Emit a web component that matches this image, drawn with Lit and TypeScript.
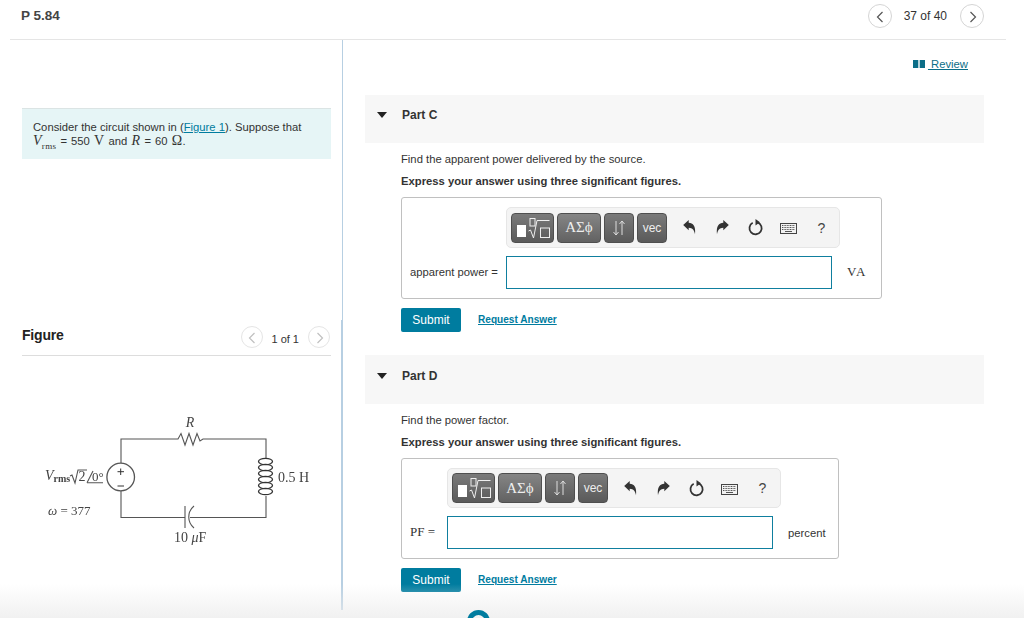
import { css, html, LitElement, svg } from "lit";
import { customElement } from "lit/decorators.js";

const prev = svg`<path d="M13.5 7 L8.5 12 L13.5 17" fill="none" stroke="currentColor" stroke-width="1.2"/>`;
const next = svg`<path d="M9.5 7 L14.5 12 L9.5 17" fill="none" stroke="currentColor" stroke-width="1.2"/>`;

@customElement("math-toolbar")
export class MathToolbar extends LitElement {
  static styles = css`
    :host {
      display: flex;
      align-items: center;
      box-sizing: border-box;
      width: 334px;
      height: 41px;
      padding: 0 4px;
      background: #f4f4f4;
      border: 1px solid #e6e6e6;
      border-radius: 5px;
    }
    .tool {
      box-sizing: border-box;
      flex: none;
      height: 30px;
      margin-right: 3px;
      display: flex;
      align-items: center;
      justify-content: center;
      color: #eee;
      background: linear-gradient(#7a7a7a, #5a5a5a);
      border: 1px solid #4f4f4f;
      border-radius: 4px;
      font-family: "Liberation Sans", Arial, sans-serif;
      font-size: 12px;
    }
    .templates { width: 43px; }
    .symbols { width: 44px; font-family: "Liberation Serif", serif; font-size: 15px; background: linear-gradient(#858585, #626262); }
    .arrows { width: 30px; }
    .vec { width: 30px; }
    .actions {
      display: flex;
      align-items: center;
      margin-left: 10px;
      gap: 14px;
    }
    .actions svg { display: block; width: 19px; height: 19px; }
    .help {
      font: 14px "Liberation Sans", Arial, sans-serif;
      color: #444;
      width: 19px;
      text-align: center;
    }
  `;

  render() {
    return html`
      <div class="tool templates">
        <svg width="39" height="26" viewBox="0 0 39 26">
          <rect x="4" y="10" width="9" height="12" fill="#fff" />
          <rect x="17" y="3.5" width="5" height="7.5" fill="none" stroke="#eee" />
          <path d="M15.5 16 L17.5 15 L20.5 23 L24 5.5 H36.5" fill="none" stroke="#eee" />
          <rect x="27.5" y="13" width="9" height="9.5" fill="none" stroke="#eee" />
        </svg>
      </div>
      <div class="tool symbols">ΑΣϕ</div>
      <div class="tool arrows">
        <svg width="16" height="18" viewBox="0 0 16 18">
          <path d="M5 2 V16 M2.5 13 L5 16 L7.5 13 M11 16 V2 M8.5 5 L11 2 L13.5 5" fill="none" stroke="#ddd" />
        </svg>
      </div>
      <div class="tool vec">vec</div>
      <div class="actions">
        <svg viewBox="0 0 19 19">
          <path d="M3.2 7 L8.7 2 V4.7 C13 4.7 16 8 15 16.2 C14.4 12.5 12.5 9.7 8.7 9.7 V12.2 Z" fill="#333" />
        </svg>
        <svg viewBox="0 0 19 19">
          <path d="M15.8 7 L10.3 2 V4.7 C6 4.7 3 8 4 16.2 C4.6 12.5 6.5 9.7 10.3 9.7 V12.2 Z" fill="#333" />
        </svg>
        <svg viewBox="0 0 19 19">
          <path d="M6.7 4.8 A6.1 6.1 0 1 0 11.5 4.4" fill="none" stroke="#333" stroke-width="1.8" />
          <path d="M9.5 1 L14 4.2 L9.5 7.5 Z" fill="#333" />
        </svg>
        <svg viewBox="0 0 19 19">
          <rect x="1.5" y="5.5" width="16" height="10" fill="#f2f2f2" stroke="#444" />
          <path d="M3 7.5 H16 M3 9.5 H16 M3 11.5 H16" stroke="#555" stroke-dasharray="1 0.6" />
          <path d="M6 13.5 H13" stroke="#555" />
        </svg>
        <span class="help">?</span>
      </div>
    `;
  }
}

@customElement("part-section")
export class PartSection extends LitElement {
  static properties = {
    name: {},
    question: {},
    label: {},
    unit: {},
  };
  declare name: string;
  declare question: string;
  declare label: string;
  declare unit: string;

  static styles = css`
    :host {
      display: block;
      font-family: "Liberation Sans", Arial, sans-serif;
      color: #333;
    }
    .bar {
      display: flex;
      align-items: center;
      box-sizing: border-box;
      height: 48px;
      padding: 0 0 8px 12px;
      background: #f7f7f7;
      margin-right: 40px;
    }
    .bar.tall { height: 49px; }
    .bar i {
      width: 0;
      height: 0;
      border-left: 5px solid transparent;
      border-right: 5px solid transparent;
      border-top: 6px solid #222;
      margin: 0 15px 0 0;
    }
    .bar b { font-size: 12px; color: #333; }
    .content { padding: 9px 0 0 36px; }
    p { margin: 0; font-size: 11.25px; line-height: 15px; }
    .express { margin-top: 7px; font-weight: bold; }
    .answer {
      box-sizing: border-box;
      margin-top: 8px;
      padding: 9px 0 9px 8px;
      background: #fff;
      border: 1px solid #c0c0c0;
      border-radius: 3px;
    }
    .tools { display: flex; margin-bottom: 8px; }
    .row { display: flex; align-items: center; }
    .label { flex: none; margin-top: -1px; font-size: 11.25px; white-space: nowrap; }
    input {
      flex: none;
      box-sizing: border-box;
      height: 33px;
      width: 326px;
      margin: 0 0 0 8px;
      padding: 0;
      background: #fff;
      border: 1px solid #0f7f9f;
      border-radius: 0;
    }
    .unit { margin: -1px 0 0 15px; font: 13px "Liberation Serif", serif; letter-spacing: 1.2px; }
    .actions {
      display: flex;
      align-items: center;
      margin-top: 9px;
      gap: 17px;
    }
    button {
      width: 60px;
      height: 24px;
      padding: 0;
      border: 0;
      border-radius: 2px;
      background: #007c9f;
      color: #fff;
      font: 12px "Liberation Sans", Arial, sans-serif;
    }
    a {
      color: #007c9f;
      font-size: 10.1px;
      font-weight: bold;
      margin-top: -2px;
    }
    .va .answer { width: 481px; }
    .va .tools { padding-left: 96px; }
    .va .label { width: 88px; }
    .pf .answer { width: 438px; }
    .pf .tools { padding-left: 37px; }
    .pf math-toolbar { height: 40px; }
    .pf .label { width: 29px; font: 13px "Liberation Serif", serif; }
    .pf .unit { margin: 0 0 0 15px; font: 11.25px "Liberation Sans", Arial, sans-serif; letter-spacing: 0; }
  `;

  render() {
    const pf = this.name === "Part D";
    return html`
      <div class="bar ${pf ? "tall" : ""}"><i></i><b>${this.name}</b></div>
      <div class="content ${pf ? "pf" : "va"}">
        <p>${this.question}</p>
        <p class="express">Express your answer using three significant figures.</p>
        <div class="answer">
          <div class="tools"><math-toolbar></math-toolbar></div>
          <div class="row">
            <span class="label">${this.label}</span>
            <input type="text" />
            <span class="unit">${this.unit}</span>
          </div>
        </div>
        <div class="actions">
          <button>Submit</button>
          <a href="#">Request Answer</a>
        </div>
      </div>
    `;
  }
}

@customElement("app-root")
export class AppRoot extends LitElement {
  static styles = css`
    :host {
      display: block;
      position: relative;
      height: 618px;
      overflow: hidden;
      background: #fff;
      font-family: "Liberation Sans", Arial, sans-serif;
      color: #333;
    }
    header {
      display: flex;
      align-items: center;
      justify-content: space-between;
      box-sizing: border-box;
      height: 40px;
      margin: 0 18px 0 10px;
      padding: 0 22px 8px 11px;
      border-bottom: 1px solid #e5e5e5;
    }
    header b { font-size: 13.5px; color: #444; }
    .pager { display: flex; align-items: center; font-size: 12px; }
    .round {
      box-sizing: border-box;
      display: flex;
      width: 24px;
      height: 24px;
      border: 1px solid #d5d5d5;
      border-radius: 50%;
      color: #555;
    }
    .pager span { margin: 0 13px 0 12px; }
    main { display: flex; }
    .left {
      box-sizing: border-box;
      width: 343px;
      height: 570px;
      padding: 68px 11px 0 22px;
      border-right: 1px solid #b7cfe2;
      background: linear-gradient(#b7cfe2, #b7cfe2) no-repeat right bottom / 1px 290px;
    }
    .notice {
      box-sizing: border-box;
      height: 51px;
      padding: 12px 11px 0;
      background: #e6f5f6;
      border-top: 1px solid #dbe4e4;
      font-size: 11.25px;
      line-height: 12px;
    }
    .notice a { color: #007c9f; }
    .formula { word-spacing: 1px; }
    .math { font: 14px "Liberation Serif", serif; letter-spacing: 0.3px; }
    .math sub { font-size: 9px; line-height: 0; }
    .fig-head {
      display: flex;
      align-items: center;
      justify-content: space-between;
      margin-top: 160px;
      height: 36px;
      padding-right: 1px;
      border-bottom: 1px solid #ddd;
    }
    .fig-head b { font-size: 14px; color: #222; letter-spacing: -0.2px; margin-top: -4px; }
    .fig-pager { display: flex; align-items: center; font-size: 11px; }
    .fig-pager span { margin: 3px 9px 0 8px; }
    .fig-pager .round { width: 22px; height: 22px; border-color: #e5e5e5; color: #c0c0c0; }
    .fig-pager svg { margin: -1px; }
    .circuit { display: block; margin: 45px 0 0 -22px; filter: blur(0.3px); }
    .circuit text { font-family: "Liberation Serif", serif; font-size: 14px; fill: #444; }
    .circuit .small { font-size: 13px; }
    .circuit .sub { font-size: 10px; font-weight: bold; }
    .circuit .name { font-style: italic; }
    .right { flex: 1; padding: 0 0 0 22px; }
    .review {
      display: flex;
      justify-content: flex-end;
      align-items: center;
      box-sizing: border-box;
      height: 55px;
      padding: 0 56px 7px 0;
      font-size: 11.25px;
    }
    .review a { color: #0b6e88; display: flex; align-items: center; }
    .review svg { margin-right: 3px; }
    .part-d { margin-top: 23px; }
    .fade {
      position: absolute;
      left: 0;
      right: 0;
      bottom: 0;
      height: 34px;
      background: linear-gradient(rgba(240, 240, 240, 0), rgba(236, 236, 236, 0.75));
      pointer-events: none;
    }
    .help-dot {
      position: absolute;
      left: 467px;
      top: 610px;
      width: 23px;
      height: 23px;
      box-sizing: border-box;
      border: 5px solid #007c9f;
      border-radius: 50%;
    }
  `;

  render() {
    return html`
      <header>
        <b>P 5.84</b>
        <div class="pager">
          <div class="round"><svg width="22" height="22" viewBox="0 0 22 22">${prev}</svg></div>
          <span>37 of 40</span>
          <div class="round"><svg width="22" height="22" viewBox="0 0 22 22">${next}</svg></div>
        </div>
      </header>
      <main>
        <section class="left">
          <div class="notice">
            Consider the circuit shown in (<a href="#">Figure 1</a>). Suppose that<br />
            <span class="formula">
              <span class="math"><i>V</i><sub>rms</sub></span> = 550
              <span class="math">V</span> and <span class="math"><i>R</i></span> = 60
              <span class="math">Ω</span>.
            </span>
          </div>
          <div class="fig-head">
            <b>Figure</b>
            <div class="fig-pager">
              <div class="round"><svg width="22" height="22" viewBox="0 0 22 22">${prev}</svg></div>
              <span>1 of 1</span>
              <div class="round"><svg width="22" height="22" viewBox="0 0 22 22">${next}</svg></div>
            </div>
          </div>
          <svg class="circuit" width="340" height="160" viewBox="0 0 340 160">
            <g fill="none" stroke="#555" stroke-width="1.1">
              <path d="M121 62 V38 H178 L181 32.5 L185 44 L189 32.5 L193 44 L197 32.5 L200 40 L203 38 H266 V57" />
              <path d="M121 90 V116.5 H185 M190 116.5 H266 V95" />
              <path d="M185 105 V127" />
              <path d="M194 105 C187 111 187 121 194 127" />
              <circle cx="120.7" cy="76" r="13.8" stroke-width="1.3" />
              <path d="M70 75 L72 74 L75 82 L78 69 H87" />
              <path d="M87 81.7 H103 M87 81.7 L93 70" />
              <g stroke="#333" stroke-width="1.3">
                <ellipse cx="265.5" cy="60.5" rx="7" ry="3.2" />
                <ellipse cx="265.5" cy="66.5" rx="7" ry="3.2" />
                <ellipse cx="265.5" cy="72.5" rx="7" ry="3.2" />
                <ellipse cx="265.5" cy="78.5" rx="7" ry="3.2" />
                <ellipse cx="265.5" cy="84.5" rx="7" ry="3.2" />
                <ellipse cx="265.5" cy="90.5" rx="7" ry="3.2" />
              </g>
            </g>
            <path d="M117.5 70.7 H124 M120.7 67.5 V74 M117.5 85 H124" stroke="#333" fill="none" />
            <text class="name" x="190" y="26" text-anchor="middle">R</text>
            <text x="45" y="79"><tspan font-style="italic">V</tspan><tspan class="sub" dy="2">rms</tspan></text>
            <text x="78.5" y="80">2</text>
            <text x="92" y="80" class="small">0°</text>
            <text x="48" y="114" class="small"><tspan font-style="italic">ω</tspan> = 377</text>
            <text x="278" y="81">0.5 H</text>
            <text x="174" y="141">10 <tspan font-style="italic">μ</tspan>F</text>
          </svg>
        </section>
        <section class="right">
          <div class="review">
            <a href="#">
              <svg width="12" height="8" viewBox="0 0 12 8"><path d="M0 0 H5.3 V8 H0 Z M6.7 0 H12 V8 H6.7 Z" fill="#0b6e88" /></svg>
              <u>&nbsp;Review</u>
            </a>
          </div>
          <part-section
            name="Part C"
            question="Find the apparent power delivered by the source."
            label="apparent power ="
            unit="VA"
          ></part-section>
          <part-section
            class="part-d"
            name="Part D"
            question="Find the power factor."
            label="PF ="
            unit="percent"
          ></part-section>
        </section>
      </main>
      <div class="fade"></div>
      <div class="help-dot"></div>
    `;
  }
}
